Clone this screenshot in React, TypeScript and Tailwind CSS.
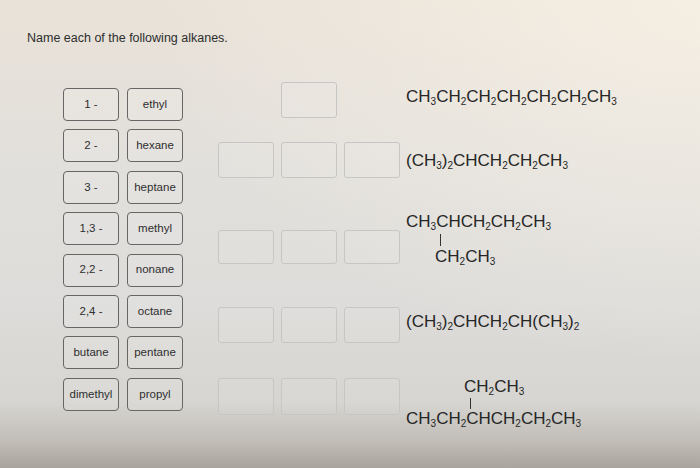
import React from "react";

const sans = { fontFamily: '"Liberation Sans", Arial, sans-serif' };

// Small subscript used in condensed formulas
function S({ n }: { n: string }) {
  return (
    <span className="relative top-[3px] text-[10px] leading-none align-baseline">{n}</span>
  );
}

// Parses a formula string such as "CH3CH2" into text + subscripts
function Formula({ text }: { text: string }) {
  const parts: React.ReactNode[] = [];
  let buf = "";
  let k = 0;
  for (const ch of text) {
    if (/[0-9]/.test(ch)) {
      if (buf) parts.push(<span key={k++}>{buf}</span>);
      buf = "";
      parts.push(<S key={k++} n={ch} />);
    } else {
      buf += ch;
    }
  }
  if (buf) parts.push(<span key={k++}>{buf}</span>);
  return <div className="text-[17px] leading-[20px] whitespace-nowrap text-[#262626]">{parts}</div>;
}

function Tile({ label }: { label: string }) {
  return (
    <div className="w-[56px] h-[33px] flex items-center justify-center rounded-[4px] border border-[#666] bg-white/10 text-[11.5px] text-[#2e2e2e]">
      {label}
    </div>
  );
}

function Slot({ h = 36 }: { h?: number }) {
  return (
    <div
      className="w-[56px] rounded-[3px] border border-[#c6c6c4] bg-white/5"
      style={{ height: h }}
    />
  );
}

const tiles: [string, string][] = [
  ["1 -", "ethyl"],
  ["2 -", "hexane"],
  ["3 -", "heptane"],
  ["1,3 -", "methyl"],
  ["2,2 -", "nonane"],
  ["2,4 -", "octane"],
  ["butane", "pentane"],
  ["dimethyl", "propyl"],
];

export default function App() {
  return (
    <div
      style={sans}
      className="relative w-[700px] h-[468px] overflow-hidden bg-[radial-gradient(ellipse_at_top_right,rgba(250,244,232,0.7)_0%,rgba(250,244,232,0)_55%),linear-gradient(180deg,#e9e2d8_0%,#e2e0dc_35%,#dddcda_65%,#d6d5d1_86%,#c2beb8_94%,#a9a49d_100%)]"
    >
      <p className="pl-[27px] pt-[30px] text-[12.5px] leading-[16px] text-[#2e2e2e]">
        Name each of the following alkanes.
      </p>

      <div className="flex items-start mt-[36px]">
        {/* word bank */}
        <div className="ml-[63px] mt-[6px] flex flex-col gap-[8.4px]">
          {tiles.map(([a, b]) => (
            <div key={a} className="flex gap-[8px]">
              <Tile label={a} />
              <Tile label={b} />
            </div>
          ))}
        </div>

        {/* questions */}
        <div className="ml-[35px] flex flex-col">
          {/* 1 */}
          <div className="flex items-start gap-[6px]">
            <div className="w-[182px] flex justify-center">
              <Slot h={36} />
            </div>
            <div className="mt-[5px]">
              <Formula text="CH3CH2CH2CH2CH2CH2CH3" />
            </div>
          </div>

          {/* 2 */}
          <div className="mt-[24px] flex items-start gap-[6px]">
            <div className="w-[182px] flex gap-[7px]">
              <Slot h={36} />
              <Slot h={36} />
              <Slot h={36} />
            </div>
            <div className="mt-[9px]">
              <Formula text="(CH3)2CHCH2CH2CH3" />
            </div>
          </div>

          {/* 3 */}
          <div className="mt-[34px] flex items-start gap-[6px]">
            <div className="mt-[18px] w-[182px] flex gap-[7px]">
              <Slot h={34} />
              <Slot h={34} />
              <Slot h={34} />
            </div>
            <div className="flex flex-col">
              <Formula text="CH3CHCH2CH2CH3" />
              <div className="ml-[34px] mt-[2px] w-px h-[12px] bg-[#333]" />
              <div className="pl-[29px] mt-[1px]">
                <Formula text="CH2CH3" />
              </div>
            </div>
          </div>

          {/* 4 */}
          <div className="mt-[40px] flex items-start gap-[6px]">
            <div className="w-[182px] flex gap-[7px]">
              <Slot h={36} />
              <Slot h={36} />
              <Slot h={36} />
            </div>
            <div className="mt-[5px]">
              <Formula text="(CH3)2CHCH2CH(CH3)2" />
            </div>
          </div>

          {/* 5 */}
          <div className="mt-[34px] flex items-start gap-[6px]">
            <div className="mt-[1px] w-[182px] flex gap-[7px]">
              <Slot h={37} />
              <Slot h={37} />
              <Slot h={37} />
            </div>
            <div className="flex flex-col">
              <div className="pl-[58px]">
                <Formula text="CH2CH3" />
              </div>
              <div className="ml-[64px] mt-[1px] w-px h-[11px] bg-[#333]" />
              <div className="mt-[0px]">
                <Formula text="CH3CH2CHCH2CH2CH3" />
              </div>
            </div>
          </div>
        </div>
      </div>
    </div>
  );
}
